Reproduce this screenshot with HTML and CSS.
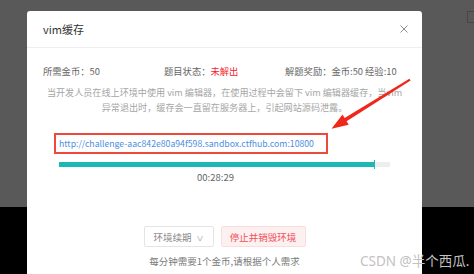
FILE: index.html
```html
<!DOCTYPE html>
<html lang="zh">
<head>
    <meta charset="UTF-8">
    <title>vim缓存</title>
    <link rel="stylesheet" href="styles.css">
</head>
<body>
    <div class="mask mask-top"></div>
    <div class="mask mask-bottom"></div>
    <div class="corner-icon"></div>

    <div class="dialog">
        <div class="dialog-header">
            <span class="dialog-title">vim缓存</span>
            <svg class="close" width="8" height="8" viewBox="0 0 8 8">
                <path d="M0.5 0.5 L7.5 7.5 M7.5 0.5 L0.5 7.5" stroke="#8c8c8c" stroke-width="1" fill="none"/>
            </svg>
        </div>

        <div class="dialog-body">
            <div class="info">
                <span>所需金币：50</span>
                <span>题目状态：<b class="unsolved">未解出</b></span>
                <span>解题奖励：金币:50 经验:10</span>
            </div>

            <p class="desc">当开发人员在线上环境中使用 vim 编辑器，在使用过程中会留下 vim 编辑器缓存，当vim<br>异常退出时，缓存会一直留在服务器上，引起网站源码泄露。</p>

            <div class="url-box">
                <a class="url" href="#">http://challenge-aac842e80a94f598.sandbox.ctfhub.com:10800</a>
            </div>

            <div class="progress">
                <div class="progress-fill"></div>
                <div class="progress-tick"></div>
            </div>
            <div class="timer">00:28:29</div>

            <div class="actions">
                <button class="btn btn-plain">环境续期 <span class="caret">∨</span></button>
                <button class="btn btn-danger">停止并销毁环境</button>
            </div>
            <div class="note">每分钟需要1个金币,请根据个人需求</div>
        </div>
    </div>

    <svg class="arrow" width="474" height="274" viewBox="0 0 474 274">
        <polygon fill="#f0281c" points="410.6,80.6 409.4,78.8 344.6,117.9 342.5,114.5 331.5,128.8 348.7,124.7 346.6,121.2"/>
    </svg>

    <div class="watermark">CSDN @半个西瓜.</div>
</body>
</html>
```

FILE: styles.css
```css
html, body {
    margin: 0;
    padding: 0;
}
body {
    width: 474px;
    height: 274px;
    overflow: hidden;
    position: relative;
    font-family: "Noto Sans CJK SC", "Noto Sans", sans-serif;
    background: #000;
}
.mask-top {
    height: 207px;
    background: #595959;
}
.mask-bottom {
    height: 67px;
    background: #000;
}
.corner-icon {
    position: absolute;
    left: 467px;
    top: 11px;
    width: 10px;
    height: 10px;
    border: 1px solid #464646;
}

.dialog {
    position: absolute;
    left: 27px;
    top: 11px;
    width: 395px;
    height: 270px;
    background: #fff;
    border-radius: 3px 3px 0 0;
}
.dialog-header {
    height: 36px;
    display: flex;
    align-items: center;
    justify-content: space-between;
    padding: 0 14px 0 16px;
    border-bottom: 1px solid #eeeeee;
}
.dialog-title {
    font-size: 11px;
    color: #333;
}

.dialog-body {
    padding: 0 16px;
}
.info {
    display: grid;
    grid-template-columns: 121px 121px 1fr;
    margin-top: 15px;
    font-size: 9.3px;
    line-height: 16px;
    color: #666;
}
.unsolved {
    color: #f5222d;
    font-weight: normal;
}
.desc {
    margin: 6px -10px 0;
    font-size: 9.1px;
    line-height: 15px;
    color: #a6a6a6;
    text-align: center;
    white-space: nowrap;
}

.url-box {
    margin: 18px 0 0 11px;
    width: 267px;
    height: 17px;
    border: 2px solid #ee4a3c;
    display: flex;
    align-items: center;
    padding-left: 3px;
    box-sizing: content-box;
}
.url {
    font-size: 8.7px;
    color: #4b8fe0;
    text-decoration: none;
    white-space: nowrap;
}

.progress {
    position: relative;
    margin: 8px 0 0 16px;
    width: 331px;
    height: 5px;
    background: #eeeeee;
}
.progress-fill {
    width: 315px;
    height: 5px;
    background: #1cb8b8;
}
.progress-tick {
    position: absolute;
    left: 315px;
    top: -2px;
    width: 1px;
    height: 9px;
    background: #1cb8b8;
}
.timer {
    margin-top: 4px;
    padding-right: 18px;
    text-align: center;
    font-size: 9.5px;
    line-height: 12px;
    color: #666;
}

.actions {
    margin-top: 43px;
    display: flex;
    justify-content: center;
    gap: 7px;
}
.btn {
    height: 21px;
    padding: 0;
    font-family: inherit;
    font-size: 9.5px;
    border-radius: 2px;
    cursor: pointer;
}
.btn-plain {
    width: 70px;
    background: #fff;
    border: 1px solid #e4e4e4;
    color: #8a8a8a;
}
.caret {
    font-size: 7px;
    margin-left: 3px;
}
.btn-danger {
    width: 85px;
    background: #fdf0f0;
    border: 1px solid #f8dede;
    color: #f0505a;
}
.note {
    margin-top: 7px;
    text-align: center;
    font-size: 9.5px;
    line-height: 14px;
    color: #7a7a7a;
}

.arrow {
    position: absolute;
    left: 0;
    top: 0;
}
.watermark {
    position: absolute;
    left: 360px;
    top: 252px;
    font-family: "Noto Sans", "Noto Sans CJK SC", sans-serif;
    font-size: 13.5px;
    line-height: 18px;
    color: #c2c2c2;
    white-space: nowrap;
}
```
